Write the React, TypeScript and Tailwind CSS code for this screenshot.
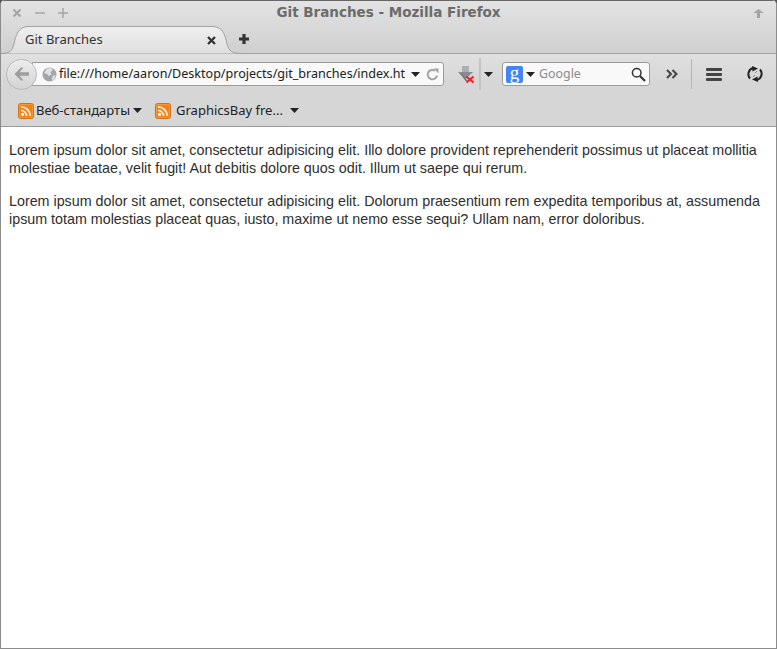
const Caret = ({ className = "" }: { className?: string }) => (
  <svg width="9" height="5" viewBox="0 0 9 5" className={className}>
    <path d="M0 0h9L4.500 5z" fill="#222" />
  </svg>
);

const RssIcon = () => (
  <svg width="16" height="16" viewBox="0 0 16 16" className="shrink-0">
    <rect x="0.5" y="0.5" width="15" height="15" rx="2" fill="#f39a3a" stroke="#d2701a" />
    <rect x="2" y="2" width="12" height="12" rx="1" fill="#f47f12" />
    <circle cx="4.600" cy="11.400" r="1.600" fill="#fff" />
    <path d="M3 7.400a5.600 5.600 0 0 1 5.600 5.600M3 3.800A9.200 9.200 0 0 1 12.200 13" fill="none" stroke="#ffe9d2" strokeWidth="1.800" />
  </svg>
);

const Globe = () => (
  <svg width="15" height="15" viewBox="0 0 15 15" className="shrink-0">
    <circle cx="7.500" cy="7.500" r="7" fill="#a3a6a8" />
    <path d="M5 1.500 9 1 11 3 8.500 5 9.500 7.500 6.500 9 5 7 2 6zM10.500 9l3-1-1 4-2.500 1.500z" fill="#e0e1e2" />
  </svg>
);

const BackButton = () => (
  <div className="relative z-10 flex h-[31px] w-[31px] shrink-0 items-center justify-center rounded-full border border-[#b4b8bc] bg-gradient-to-b from-[#ececec] to-[#d4d4d4] shadow-[inset_0_1px_0_#f8f8f8]">
    <svg width="17" height="16" viewBox="0 0 17 16">
      <path d="M8 1.500 1.500 8 8 14.500h2.500L6.600 9.700H16V6.300H6.600l3.900-4.800z" fill="#9a9ea1" />
    </svg>
  </div>
);

const DownloadIcon = () => (
  <svg width="18" height="19" viewBox="0 0 18 19">
    <path d="M4 1h7v6h4l-7.500 7L0 7h4z" fill="#adb0b3" />
    <path d="M0 7h15l-7.500 7z" fill="#888d91" />
    <path d="M1.500 8 7.500 16h2L4 8z" fill="#777c80" />
    <path d="M8.500 11.500l7 6M15.500 11.500l-7 6" stroke="#ee1f2b" strokeWidth="2.200" />
  </svg>
);

const GoogleIcon = () => (
  <div className="flex h-[17px] w-[17px] items-center justify-center rounded-[2px] bg-[#4286f5] pb-[3px] font-['Liberation_Serif',serif] text-[19px] leading-none text-white">
    g
  </div>
);

const SearchIcon = () => (
  <svg width="15" height="15" viewBox="0 0 15 15">
    <circle cx="5.700" cy="5.700" r="4.300" fill="none" stroke="#333" strokeWidth="1.500" />
    <path d="M9 9l5 5" stroke="#333" strokeWidth="2.200" />
  </svg>
);

const SyncIcon = () => (
  <svg width="16" height="16" viewBox="0 0 16 16" fill="none" stroke="#222" strokeWidth="2">
    <path d="M3 12.500A6.500 6.500 0 0 1 6 2" />
    <path d="M13 3.500A6.500 6.500 0 0 1 10 14" />
    <path d="M5 0 11 2.500 5.500 5.500zM11 16 5 13.500 10.500 10.500z" fill="#222" stroke="none" />
    <path d="M8 7 10 5M6 11l2-2" stroke="#888" strokeWidth="1" />
  </svg>
);

const DoubleChevron = () => (
  <svg width="12" height="10" viewBox="0 0 12 10" fill="none" stroke="#444" strokeWidth="2">
    <path d="M1 1l4 4-4 4M6.500 1l4 4-4 4" />
  </svg>
);

const Tab = () => (
  <div className="relative flex h-[28px] w-[240px] items-center">
    <svg width="240" height="28" viewBox="0 0 240 28" className="absolute inset-0">
      <defs>
        <linearGradient id="tabFill" x1="0" y1="0" x2="0" y2="1">
          <stop offset="0" stopColor="#efefef" />
          <stop offset="1" stopColor="#dfdfdf" />
        </linearGradient>
      </defs>
      <path
        d="M0 27.500C9 27.500 11 25 13 18 15 9 17 1 27 0.500H212C222 1 224 9 226 18 228 25 231 27.500 240 27.500"
        fill="url(#tabFill)"
        stroke="#a2a2a2"
      />
    </svg>
    <span className="relative ml-[24px] flex-1 text-[13px] text-[#333]">Git Branches</span>
    <svg width="9" height="9" viewBox="0 0 9 9" className="relative mr-[25px]">
      <path d="M1 1l7 7M8 1 1 8" stroke="#333" strokeWidth="2.300" />
    </svg>
  </div>
);

export default function App() {
  return (
    <div className="h-[649px] w-[777px] bg-[#555]">
      <div className="flex h-full flex-col overflow-hidden rounded-t-[5px] border border-t-0 border-[#8c8c8c] bg-white font-['Noto_Sans',sans-serif]">
        <div className="bg-gradient-to-b from-[#e3e3e3] to-[#cfcfcf] shadow-[inset_0_1px_0_#666]">
          <div className="flex h-[26px] items-center pl-[11px] pr-[12px]">
            <div className="flex w-[62px] items-center gap-[13px]">
              <svg width="10" height="10" viewBox="0 0 10 10">
                <path d="M1.500 1.500l7 7M8.500 1.500l-7 7" stroke="#a4a4a4" strokeWidth="2" />
              </svg>
              <svg width="10" height="10" viewBox="0 0 10 10">
                <path d="M0 5h10" stroke="#a4a4a4" strokeWidth="1.500" />
              </svg>
              <svg width="10" height="10" viewBox="0 0 10 10">
                <path d="M5 0v10M0 5h10" stroke="#a4a4a4" strokeWidth="1.500" />
              </svg>
            </div>
            <div className="flex-1 pr-[50px] text-center font-['DejaVu_Sans',sans-serif] text-[13.500px] font-bold leading-none text-[#6b6b6b]">
              Git Branches - Mozilla Firefox
            </div>
            <svg width="11" height="11" viewBox="0 0 11 11">
              <path d="M5.500 1 10.500 5H7v5H4V5H.5z" fill="#a4a4a4" />
            </svg>
          </div>
          <div className="flex h-[28px] items-end border-b border-[#a2a2a2]">
            <div className="-mb-px">
              <Tab />
            </div>
            <svg width="10" height="10" viewBox="0 0 10 10" className="mb-[9px] -ml-[2px]">
              <path d="M5 0v10M0 5h10" stroke="#333" strokeWidth="3.200" />
            </svg>
          </div>
        </div>

        <div className="h-[73px] border-b border-[#9a9a9a] bg-gradient-to-b from-[#e0e0e0] to-[#d6d6d6] to-40%">
          <div className="flex h-[40px] items-center pl-[5px]">
            <BackButton />
            <div className="-ml-[5px] flex h-[24px] w-[412px] items-center rounded-r-[3px] border border-[#9c9c9c] bg-[#f9f9f9] pl-[9px] pr-[4px] text-[#222]">
              <Globe />
              <span className="ml-[2px] min-w-0 flex-1 whitespace-nowrap text-[12.550px]">file:///home/aaron/Desktop/projects/git_branches/index.ht</span>
              <Caret />
              <svg width="13" height="13" viewBox="0 0 13 13" fill="none" className="ml-[6px]">
                <path d="M11 7.500A4.700 4.700 0 1 1 9 2.700" stroke="#9fa5aa" strokeWidth="2" />
                <path d="M7.500 0.500h5v5z" fill="#9fa5aa" />
              </svg>
            </div>
            <div className="ml-[14px]">
              <DownloadIcon />
            </div>
            <div className="ml-[3px] h-[32px] w-[2px] bg-[#c2c2c2]" />
            <Caret className="ml-[3px]" />
            <div className="ml-[9px] flex h-[24px] w-[148px] items-center rounded-[3px] border border-[#9c9c9c] bg-[#f9f9f9] pl-[3px] pr-[3px] text-[12.400px] text-[#8b8b8b]">
              <GoogleIcon />
              <Caret className="ml-[3px]" />
              <span className="ml-[4px] flex-1">Google</span>
              <SearchIcon />
            </div>
            <div className="ml-[16px]">
              <DoubleChevron />
            </div>
            <div className="ml-[13px] h-[30px] w-px bg-[#b0b6bc]" />
            <div className="ml-[14px] flex w-[16px] flex-col gap-[2px]">
              <div className="h-[3px] rounded-[1px] bg-[#444]" />
              <div className="h-[3px] rounded-[1px] bg-[#444]" />
              <div className="h-[3px] rounded-[1px] bg-[#444]" />
            </div>
            <div className="ml-[25px]">
              <SyncIcon />
            </div>
          </div>
          <div className="flex h-[32px] items-center pl-[17px] pt-[1px] text-[13px] text-[#222]">
            <RssIcon />
            <span className="ml-[2px]">Веб-стандарты</span>
            <Caret className="ml-[3px]" />
            <div className="ml-[13px]">
              <RssIcon />
            </div>
            <span className="ml-[5px]">GraphicsBay fre...</span>
            <Caret className="ml-[7px]" />
          </div>
        </div>

        <main className="flex-1 bg-white p-[8px] font-['Liberation_Sans',sans-serif] text-[14.300px] leading-[18px] text-[#2e2e2e]">
          <p className="mb-[15px] mt-[6px]">
            Lorem ipsum dolor sit amet, consectetur adipisicing elit. Illo dolore provident reprehenderit possimus ut placeat mollitia molestiae beatae, velit fugit! Aut debitis dolore quos odit. Illum ut saepe qui rerum.
          </p>
          <p>
            Lorem ipsum dolor sit amet, consectetur adipisicing elit. Dolorum praesentium rem expedita temporibus at, assumenda ipsum totam molestias placeat quas, iusto, maxime ut nemo esse sequi? Ullam nam, error doloribus.
          </p>
        </main>
      </div>
    </div>
  );
}
